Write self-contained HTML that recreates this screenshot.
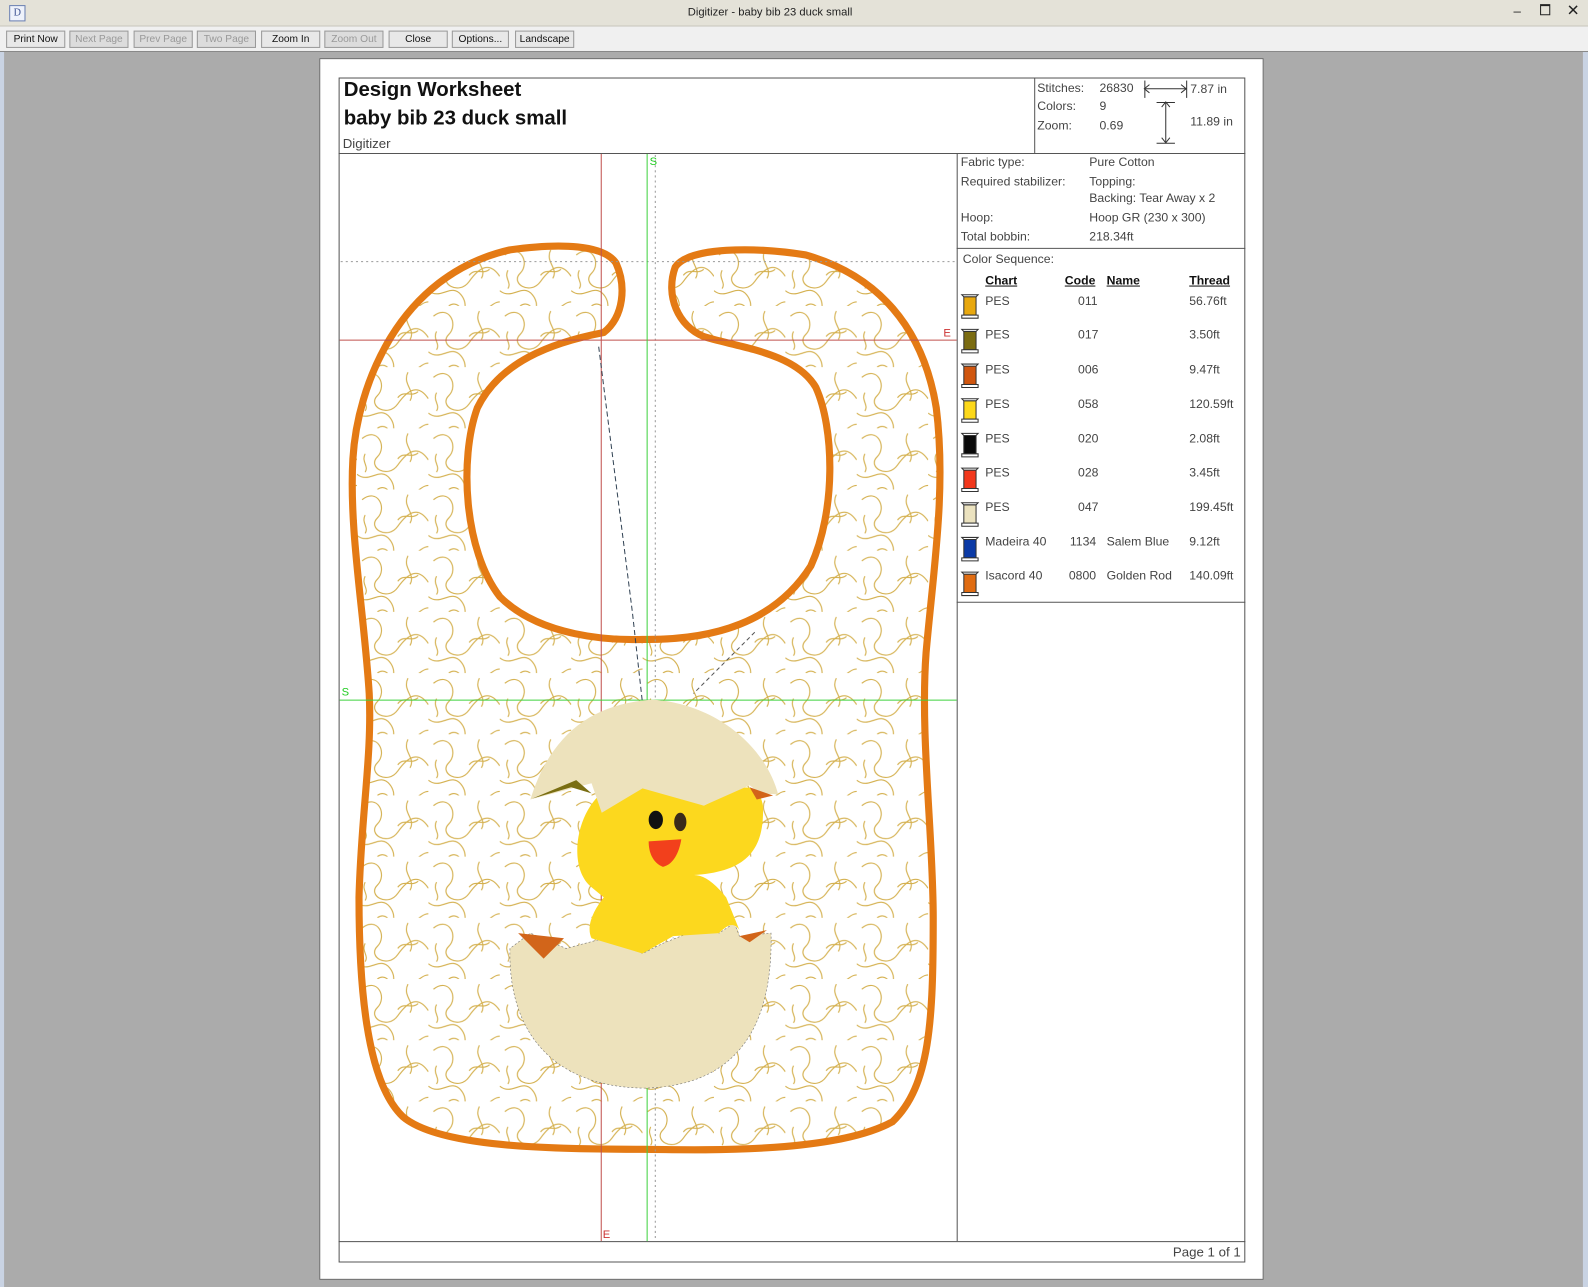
<!DOCTYPE html>
<html><head><meta charset="utf-8"><style>
html,body{margin:0;padding:0;width:1588px;height:1287px;overflow:hidden;background:#ababab;font-family:"Liberation Sans",sans-serif}
#w{position:absolute;left:0;top:0;width:1557px;height:1262px;transform:scale(1.01991,1.01981);transform-origin:0 0;background:#ababab}
.a{position:absolute;white-space:nowrap}
#tb{left:0;top:0;width:1557px;height:25px;background:#e4e2d8;border-bottom:1px solid #c8c6bc}
#tool{left:0;top:26px;width:1557px;height:24px;background:#f0f0f0;border-bottom:1px solid #888}
.btn{position:absolute;top:4px;height:15px;border:1px solid #999;background:#e8e8e8;font-size:10px;line-height:15px;text-align:center;color:#111}
.btn.d{color:#999;background:#dcdcdc}
#page{left:313px;top:57px;width:926px;height:1198px;background:#fff;border:1px solid #666;box-sizing:border-box}
.t{font-size:12px;color:#444}
.h{font-size:12px;font-weight:bold;color:#111;text-decoration:underline}
</style></head><body><div id="w">
<div class="a" id="tb"></div>
<div class="a" style="left:9px;top:5px;width:14px;height:14px;border:1px solid #6a7fb0;background:#eef2fb;font-size:10px;line-height:14px;text-align:center;color:#3a4f8f;font-family:'Liberation Serif',serif">D</div>
<div class="a" style="left:0;width:1510px;top:6px;text-align:center;font-size:11px;color:#222">Digitizer - baby bib 23 duck small</div>
<div class="a" style="left:1484px;top:3px;font-size:13px;color:#222">–</div>
<div class="a" style="left:1510px;top:4px;width:8px;height:8px;border:1px solid #222;border-top-width:2px"></div>
<div class="a" style="left:1536px;top:1px;font-size:15px;color:#222">✕</div>
<div class="a" id="tool">
<div class="btn" style="left:6px;width:56px">Print Now</div>
<div class="btn d" style="left:68px;width:56px">Next Page</div>
<div class="btn d" style="left:131px;width:56px">Prev Page</div>
<div class="btn d" style="left:193px;width:56px">Two Page</div>
<div class="btn" style="left:256px;width:56px">Zoom In</div>
<div class="btn d" style="left:318px;width:56px">Zoom Out</div>
<div class="btn" style="left:381px;width:56px">Close</div>
<div class="btn" style="left:443px;width:54px">Options...</div>
<div class="btn" style="left:505px;width:56px">Landscape</div>
</div>
<div class="a" style="left:0;top:51px;width:4px;height:1211px;background:#c9d3e3"></div>
<div class="a" style="left:1552px;top:51px;width:5px;height:1211px;background:#c9d3e3"></div>
<div class="a" id="page"></div>
<svg class="a" style="left:0;top:0" width="1557" height="1262" viewBox="0 0 1557 1262">
<defs>
<pattern id="sq" width="70" height="60" patternUnits="userSpaceOnUse">
<path d="M5 10c15-12 25 8 15 18s10 22 20 8 20-20 30-5M0 45c12 10 22-8 32 4s-4 22 14 18 16-14 30-10M50 5c-6 12 8 18 2 28M20 60c8-6 16 4 10 10M40 30c6-8 14 0 20-6M8 25c-4 8 4 12 0 18" fill="none" stroke="#d4b04e" stroke-width="1.1"/>
</pattern>
</defs>
<g fill="none" stroke="#555" stroke-width="1">
<rect x="332.5" y="76.5" width="888" height="1141"/>
<line x1="332" y1="150.5" x2="1221" y2="150.5"/>
<line x1="1014.5" y1="76" x2="1014.5" y2="150"/>
<line x1="938.5" y1="150" x2="938.5" y2="1217"/>
<line x1="938" y1="243.5" x2="1221" y2="243.5"/>
<line x1="938" y1="590.5" x2="1221" y2="590.5"/>
<line x1="332" y1="1237.5" x2="1221" y2="1237.5"/>
<line x1="332.5" y1="1217" x2="332.5" y2="1237"/>
<line x1="1220.5" y1="1217" x2="1220.5" y2="1237"/>
</g>
<g stroke="#333" stroke-width="1" fill="none">
<line x1="1122" y1="87" x2="1163" y2="87"/><line x1="1122.5" y1="79" x2="1122.5" y2="96"/><line x1="1163.5" y1="79" x2="1163.5" y2="96"/>
<path d="M1127 83l-5 4 5 4M1158 83l5 4-5 4"/>
<line x1="1143" y1="100" x2="1143" y2="140"/><line x1="1134" y1="100.5" x2="1152" y2="100.5"/><line x1="1134" y1="140.5" x2="1152" y2="140.5"/>
<path d="M1139 105l4-5 4 5M1139 135l4 5 4-5"/>
</g>
<!-- bib -->
<path d="M500 245 C550 238 592 240 604 258 C614 280 612 310 592 326 C540 336 490 355 468 400 C450 450 455 540 490 585 C530 625 600 628 630 627 C700 628 760 610 795 555 C820 500 818 420 800 380 C780 345 720 340 690 330 C665 320 652 290 662 262 C675 242 740 242 790 250 C860 270 905 320 918 400 C928 480 915 560 908 640 C902 720 915 820 915 900 C915 1000 912 1065 875 1100 C820 1130 700 1128 630 1127 C540 1127 430 1125 395 1095 C358 1060 352 960 352 880 C354 800 365 740 362 680 C357 600 342 520 346 450 C350 380 390 270 500 245Z" fill="url(#sq)" stroke="#e47a14" stroke-width="7"/>
<!-- guide lines -->
<line x1="334" y1="256.5" x2="938" y2="256.5" stroke="#999" stroke-dasharray="2 3"/>
<line x1="642.5" y1="152" x2="642.5" y2="1217" stroke="#999" stroke-dasharray="2 3"/>
<line x1="589.5" y1="151" x2="589.5" y2="1217" stroke="#c0504d"/>
<line x1="333" y1="333.5" x2="938" y2="333.5" stroke="#c0504d"/>
<line x1="634.5" y1="151" x2="634.5" y2="1217" stroke="#3fd23f"/>
<line x1="333" y1="686.5" x2="938" y2="686.5" stroke="#3fd23f"/>
<path d="M587 340 L620 600 L630 690 L660 920" stroke="#345" stroke-dasharray="5 3" fill="none"/>
<path d="M740 620 L680 680" stroke="#555" stroke-dasharray="4 3" fill="none"/>
<text x="637" y="162" font-size="11" fill="#2c2" font-family="Liberation Sans">S</text>
<text x="335" y="682" font-size="11" fill="#2c2" font-family="Liberation Sans">S</text>
<text x="925" y="330" font-size="11" fill="#c33" font-family="Liberation Sans">E</text>
<text x="591" y="1214" font-size="11" fill="#c33" font-family="Liberation Sans">E</text>
<!-- duck -->
<path d="M500 930 C498 1010 540 1065 630 1067 C720 1066 758 1010 756 915 L725 918 L720 905 L705 915 L700 905 L650 925 L630 935 L600 918 L555 930 L520 915 Z" fill="#ede2bc" stroke="#777" stroke-width="0.6" stroke-dasharray="2 2"/>
<path d="M598 772 C565 790 555 850 580 870 L592 880 C580 895 575 910 580 920 L630 935 L660 918 L705 915 C715 905 720 905 725 912 L712 880 C700 865 690 858 680 858 C730 855 750 835 748 790 C745 770 730 770 720 775 L690 790 L655 773 Z" fill="#fcd81e"/>
<path d="M520 784 C540 720 580 690 640 686 C700 690 750 730 763 779 L745 778 L735 770 L690 790 L630 773 L590 797 L580 768 Z" fill="#ede2bc"/>
<path d="M522 783 L565 765 L580 778 L560 772 Z" fill="#7a6e12"/>
<path d="M735 772 L758 780 L742 784 Z" fill="#d2651a"/>
<path d="M508 915 L553 920 L533 940 Z" fill="#d2651a"/>
<path d="M725 918 L752 912 L735 924 Z" fill="#d2651a"/>
<ellipse cx="643" cy="804" rx="7" ry="9" fill="#111"/>
<ellipse cx="667" cy="806" rx="6" ry="9" fill="#3a2a1a"/>
<path d="M636 825 L668 823 C666 836 660 848 650 850 C640 846 636 836 636 825Z" fill="#f2401c"/>
<!-- spools -->
<g stroke="#333" stroke-width="1">
<g transform="translate(943,289)"><rect x="2" y="2" width="12" height="18" fill="#e8a80f"/><path d="M0 0h16l-2 2h-12zM0 23h16v-3h-16z" fill="#fff"/></g>
<g transform="translate(943,323)"><rect x="2" y="2" width="12" height="18" fill="#7b6c12"/><path d="M0 0h16l-2 2h-12zM0 23h16v-3h-16z" fill="#fff"/></g>
<g transform="translate(943,357)"><rect x="2" y="2" width="12" height="18" fill="#d0560f"/><path d="M0 0h16l-2 2h-12zM0 23h16v-3h-16z" fill="#fff"/></g>
<g transform="translate(943,391)"><rect x="2" y="2" width="12" height="18" fill="#fcd81a"/><path d="M0 0h16l-2 2h-12zM0 23h16v-3h-16z" fill="#fff"/></g>
<g transform="translate(943,425)"><rect x="2" y="2" width="12" height="18" fill="#0a0a0a"/><path d="M0 0h16l-2 2h-12zM0 23h16v-3h-16z" fill="#fff"/></g>
<g transform="translate(943,459)"><rect x="2" y="2" width="12" height="18" fill="#f2381c"/><path d="M0 0h16l-2 2h-12zM0 23h16v-3h-16z" fill="#fff"/></g>
<g transform="translate(943,493)"><rect x="2" y="2" width="12" height="18" fill="#ebe2bf"/><path d="M0 0h16l-2 2h-12zM0 23h16v-3h-16z" fill="#fff"/></g>
<g transform="translate(943,527)"><rect x="2" y="2" width="12" height="18" fill="#0b3aa6"/><path d="M0 0h16l-2 2h-12zM0 23h16v-3h-16z" fill="#fff"/></g>
<g transform="translate(943,561)"><rect x="2" y="2" width="12" height="18" fill="#e06c12"/><path d="M0 0h16l-2 2h-12zM0 23h16v-3h-16z" fill="#fff"/></g>
</g>
</svg>
<div class="a" style="left:337px;top:77px;font-size:20px;font-weight:bold;color:#111">Design Worksheet</div>
<div class="a" style="left:337px;top:105px;font-size:20px;font-weight:bold;color:#111">baby bib 23 duck small</div>
<div class="a t" style="left:336px;top:133px;font-size:13px">Digitizer</div>
<div class="a t" style="left:1017px;top:79px">Stitches:</div><div class="a t" style="left:1078px;top:79px">26830</div>
<div class="a t" style="left:1017px;top:97px">Colors:</div><div class="a t" style="left:1078px;top:97px">9</div>
<div class="a t" style="left:1017px;top:116px">Zoom:</div><div class="a t" style="left:1078px;top:116px">0.69</div>
<div class="a t" style="left:1167px;top:80px">7.87 in</div>
<div class="a t" style="left:1167px;top:112px">11.89 in</div>
<div class="a t" style="left:942px;top:152px">Fabric type:</div><div class="a t" style="left:1068px;top:152px">Pure Cotton</div>
<div class="a t" style="left:942px;top:171px">Required stabilizer:</div><div class="a t" style="left:1068px;top:171px">Topping:</div>
<div class="a t" style="left:1068px;top:187px">Backing: Tear Away x 2</div>
<div class="a t" style="left:942px;top:206px">Hoop:</div><div class="a t" style="left:1068px;top:206px">Hoop GR (230 x 300)</div>
<div class="a t" style="left:942px;top:225px">Total bobbin:</div><div class="a t" style="left:1068px;top:225px">218.34ft</div>
<div class="a t" style="left:944px;top:247px">Color Sequence:</div>
<div class="a h" style="left:966px;top:268px">Chart</div>
<div class="a h" style="left:1044px;top:268px">Code</div>
<div class="a h" style="left:1085px;top:268px">Name</div>
<div class="a h" style="left:1166px;top:268px">Thread</div>
<div class="a t" style="left:966px;top:288px">PES</div><div class="a t" style="left:1057px;top:288px">011</div><div class="a t" style="left:1166px;top:288px">56.76ft</div>
<div class="a t" style="left:966px;top:321px">PES</div><div class="a t" style="left:1057px;top:321px">017</div><div class="a t" style="left:1166px;top:321px">3.50ft</div>
<div class="a t" style="left:966px;top:355px">PES</div><div class="a t" style="left:1057px;top:355px">006</div><div class="a t" style="left:1166px;top:355px">9.47ft</div>
<div class="a t" style="left:966px;top:389px">PES</div><div class="a t" style="left:1057px;top:389px">058</div><div class="a t" style="left:1166px;top:389px">120.59ft</div>
<div class="a t" style="left:966px;top:423px">PES</div><div class="a t" style="left:1057px;top:423px">020</div><div class="a t" style="left:1166px;top:423px">2.08ft</div>
<div class="a t" style="left:966px;top:456px">PES</div><div class="a t" style="left:1057px;top:456px">028</div><div class="a t" style="left:1166px;top:456px">3.45ft</div>
<div class="a t" style="left:966px;top:490px">PES</div><div class="a t" style="left:1057px;top:490px">047</div><div class="a t" style="left:1166px;top:490px">199.45ft</div>
<div class="a t" style="left:966px;top:524px">Madeira 40</div><div class="a t" style="left:1049px;top:524px">1134</div><div class="a t" style="left:1085px;top:524px">Salem Blue</div><div class="a t" style="left:1166px;top:524px">9.12ft</div>
<div class="a t" style="left:966px;top:557px">Isacord 40</div><div class="a t" style="left:1048px;top:557px">0800</div><div class="a t" style="left:1085px;top:557px">Golden Rod</div><div class="a t" style="left:1166px;top:557px">140.09ft</div>
<div class="a t" style="left:1150px;top:1220px;font-size:13px">Page 1 of 1</div>
</div></body></html>
